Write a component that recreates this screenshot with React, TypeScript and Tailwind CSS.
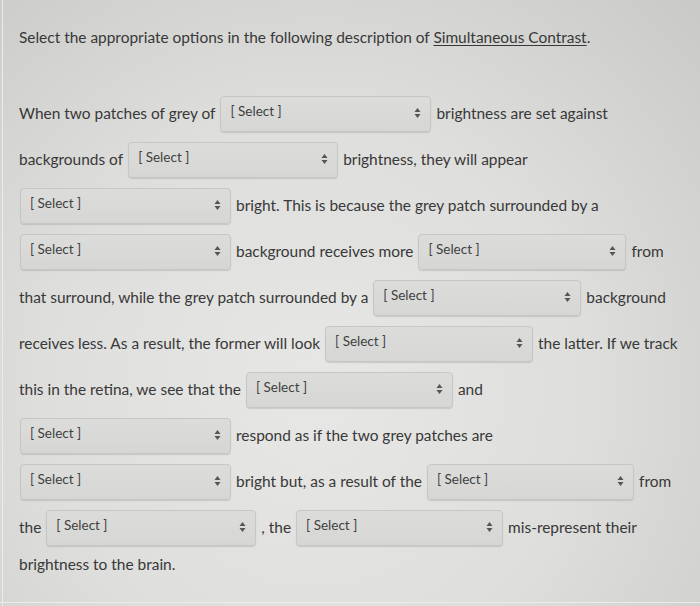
import React from "react";

function Sel({ w }: { w: number }) {
  return (
    <div
      className="mx-[5px] flex h-[36px] shrink-0 items-center justify-between rounded-[4px] border border-[#c6c7c4] bg-[linear-gradient(#dcdddb,#d6d7d4)] pl-[9px] pr-[9px] shadow-[0_1px_1px_rgba(0,0,0,0.12)]"
      style={{ width: w }}
    >
      <span className="text-[13.5px] leading-none text-[#3f3f3f] -mt-[4px]">[ Select ]</span>
      <svg width="7" height="12" viewBox="0 0 7 12" className="-mt-[2px]">
        <path d="M3.5 1 L6.5 5 L0.5 5 Z" fill="#555" />
        <path d="M3.5 11 L6.5 7 L0.5 7 Z" fill="#555" />
      </svg>
    </div>
  );
}

function Row({ children }: { children: React.ReactNode }) {
  return <div className="flex h-[46px] items-center whitespace-nowrap">{children}</div>;
}

export default function App() {
  return (
    <div
      className="relative h-[606px] w-[700px] overflow-hidden bg-[radial-gradient(ellipse_at_45%_65%,#e7e7e5_0%,#dededc_50%,#c9cac7_100%)] text-[15.45px] text-[#383838]"
      style={{ fontFamily: "Lato, 'Open Sans', sans-serif" }}
    >
      <div className="absolute left-[2px] top-0 h-full w-px bg-[#ebebea]" />
      <div className="absolute bottom-[3px] left-0 h-px w-full bg-[#ececea]" />
      <div className="pl-[19px]">
        <div className="mt-[27px] h-[20px] leading-[20px]">
          Select the appropriate options in the following description of{" "}
          <span className="underline underline-offset-2">Simultaneous Contrast</span>.
        </div>
        <div className="mt-[44px]">
          <Row>
            <span>When two patches of grey of</span>
            <Sel w={211} />
            <span>brightness are set against</span>
          </Row>
          <Row>
            <span>backgrounds of</span>
            <Sel w={210} />
            <span>brightness, they will appear</span>
          </Row>
          <Row>
            <div className="-ml-[4px]" />
            <Sel w={211} />
            <span>bright. This is because the grey patch surrounded by a</span>
          </Row>
          <Row>
            <div className="-ml-[4px]" />
            <Sel w={211} />
            <span>background receives more</span>
            <Sel w={208} />
            <span>from</span>
          </Row>
          <Row>
            <span>that surround, while the grey patch surrounded by a</span>
            <Sel w={208} />
            <span>background</span>
          </Row>
          <Row>
            <span>receives less. As a result, the former will look</span>
            <Sel w={208} />
            <span>the latter. If we track</span>
          </Row>
          <Row>
            <span>this in the retina, we see that the</span>
            <Sel w={207} />
            <span>and</span>
          </Row>
          <Row>
            <div className="-ml-[4px]" />
            <Sel w={211} />
            <span>respond as if the two grey patches are</span>
          </Row>
          <Row>
            <div className="-ml-[4px]" />
            <Sel w={211} />
            <span>bright but, as a result of the</span>
            <Sel w={207} />
            <span>from</span>
          </Row>
          <Row>
            <span>the</span>
            <Sel w={210} />
            <span>, the</span>
            <Sel w={207} />
            <span>mis-represent their</span>
          </Row>
          <div className="flex h-[28px] items-center">brightness to the brain.</div>
        </div>
      </div>
    </div>
  );
}
